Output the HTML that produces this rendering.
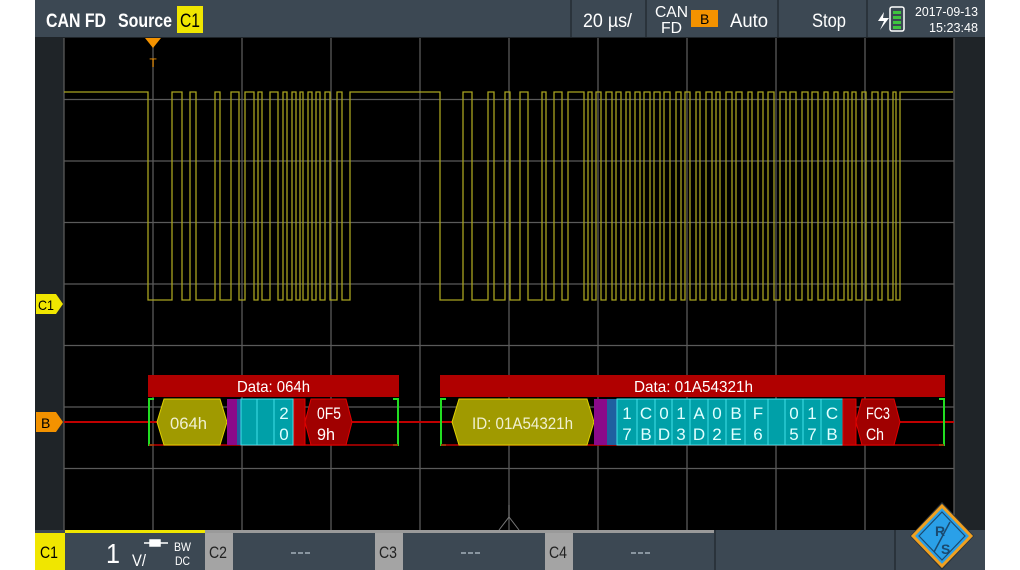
<!DOCTYPE html>
<html><head><meta charset="utf-8"><style>
html,body{margin:0;padding:0;background:#fff;width:1020px;height:570px;overflow:hidden;font-family:"Liberation Sans",sans-serif}
</style></head><body>
<svg width="1020" height="570" style="position:absolute;left:0;top:0" font-family="Liberation Sans, sans-serif">
<rect x="35" y="0" width="950" height="570" fill="#1f2428"/>
<rect x="35" y="0" width="950" height="37" fill="#3c4853"/>
<g stroke="#2a333b" stroke-width="2"><line x1="571" y1="0" x2="571" y2="37"/><line x1="646" y1="0" x2="646" y2="37"/><line x1="778" y1="0" x2="778" y2="37"/><line x1="867" y1="0" x2="867" y2="37"/></g>
<text x="46" y="27" fill="#fff" font-size="19" font-weight="bold" textLength="60" lengthAdjust="spacingAndGlyphs">CAN FD</text>
<text x="118" y="27" fill="#fff" font-size="19" font-weight="bold" textLength="54" lengthAdjust="spacingAndGlyphs">Source</text>
<rect x="177" y="6" width="26" height="27" fill="#f0e600"/>
<text x="180" y="27" fill="#000" font-size="19" textLength="20" lengthAdjust="spacingAndGlyphs">C1</text>
<text x="583" y="27" fill="#fff" font-size="19" textLength="49" lengthAdjust="spacingAndGlyphs">20 µs/</text>
<text x="655" y="17" fill="#fff" font-size="16" textLength="33" lengthAdjust="spacingAndGlyphs">CAN</text>
<text x="661" y="33" fill="#fff" font-size="16" textLength="21" lengthAdjust="spacingAndGlyphs">FD</text>
<rect x="691" y="10" width="27" height="17" fill="#f39200"/>
<text x="700" y="24" fill="#000" font-size="14">B</text>
<text x="730" y="27" fill="#fff" font-size="19" textLength="38" lengthAdjust="spacingAndGlyphs">Auto</text>
<text x="812" y="27" fill="#fff" font-size="19" textLength="34" lengthAdjust="spacingAndGlyphs">Stop</text>
<rect x="890" y="7" width="14" height="24" rx="2" fill="none" stroke="#fff" stroke-width="1.5"/>
<g fill="#3ec43e"><rect x="893" y="11" width="8" height="3"/><rect x="893" y="16" width="8" height="3"/><rect x="893" y="21" width="8" height="3"/><rect x="893" y="26" width="8" height="3"/></g>
<path d="M884 12 L878 21 L884 21 L880 30 L889 18 L883 18 Z" fill="#fff"/>
<text x="978" y="16" fill="#fff" font-size="13" text-anchor="end" textLength="63" lengthAdjust="spacingAndGlyphs">2017-09-13</text>
<text x="978" y="32" fill="#fff" font-size="13" text-anchor="end" textLength="49" lengthAdjust="spacingAndGlyphs">15:23:48</text>
<rect x="64" y="38" width="890" height="492" fill="#000"/>
<g stroke="#5a5a5a" stroke-width="1.3" id="grid"></g>
<path id="wave" fill="none" stroke="#a8a420" stroke-width="1.3"/>
<path d="M145 38 L161 38 L153 48 Z" fill="#f39200"/>
<text x="153" y="67" fill="#f39200" font-size="12" text-anchor="middle">T</text>
<path d="M36 294 L56 294 L63 304 L56 314 L36 314 Z" fill="#f0e600"/>
<text x="38" y="310" fill="#000" font-size="14" textLength="16" lengthAdjust="spacingAndGlyphs">C1</text>
<path d="M36 412 L56 412 L63 422 L56 432 L36 432 Z" fill="#f39200"/>
<text x="41" y="428" fill="#000" font-size="14">B</text>
<line x1="64" y1="422" x2="954" y2="422" stroke="#c00000" stroke-width="2"/>
<rect x="148" y="375" width="251" height="22" fill="#b00000"/>
<text x="237" y="392" fill="#fff" font-size="16" textLength="73" lengthAdjust="spacingAndGlyphs">Data: 064h</text>
<path d="M154 399 L149 399 L149 445 L154 445 M393 399 L398 399 L398 445 L393 445" fill="none" stroke="#22dd22" stroke-width="2"/>
<line x1="149" y1="445" x2="398" y2="445" stroke="#c00000" stroke-width="1.5"/>
<path d="M164 399 L220 399 L227 422 L220 445 L164 445 L157 422 Z" fill="#a09a00" stroke="#e0d000"/>
<text x="170" y="429" fill="#f0f0d0" font-size="17" textLength="37" lengthAdjust="spacingAndGlyphs">064h</text>
<rect x="227" y="399" width="10" height="46" fill="#8a0a8a"/>
<rect x="237" y="399" width="4" height="46" fill="#1f5fa0"/>
<rect x="241" y="399" width="52" height="46" fill="#00a0a8" stroke="#40e0e8"/>
<line x1="257" y1="399" x2="257" y2="445" stroke="#40e0e8"/><line x1="274" y1="399" x2="274" y2="445" stroke="#40e0e8"/>
<text x="284" y="419" fill="#e0ffff" font-size="17" text-anchor="middle">2</text>
<text x="284" y="440" fill="#e0ffff" font-size="17" text-anchor="middle">0</text>
<rect x="294" y="399" width="11" height="46" fill="#b00000" stroke="#e00000"/>
<path d="M311 399 L346 399 L352 422 L346 445 L311 445 L305 422 Z" fill="#a00000" stroke="#e00000"/>
<text x="317" y="419" fill="#fff" font-size="17" textLength="24" lengthAdjust="spacingAndGlyphs">0F5</text>
<text x="317" y="440" fill="#fff" font-size="17" textLength="18" lengthAdjust="spacingAndGlyphs">9h</text>
<rect x="440" y="375" width="505" height="22" fill="#b00000"/>
<text x="634" y="392" fill="#fff" font-size="16" textLength="119" lengthAdjust="spacingAndGlyphs">Data: 01A54321h</text>
<path d="M446 399 L441 399 L441 445 L446 445 M939 399 L944 399 L944 445 L939 445" fill="none" stroke="#22dd22" stroke-width="2"/>
<line x1="441" y1="445" x2="944" y2="445" stroke="#c00000" stroke-width="1.5"/>
<path d="M459 399 L587 399 L594 422 L587 445 L459 445 L452 422 Z" fill="#a09a00" stroke="#e0d000"/>
<text x="472" y="429" fill="#f0f0d0" font-size="17" textLength="101" lengthAdjust="spacingAndGlyphs">ID: 01A54321h</text>
<rect x="594" y="399" width="13" height="46" fill="#8a0a8a"/>
<rect x="607" y="399" width="10" height="46" fill="#1f5fa0"/>
<rect x="617" y="399" width="226" height="46" fill="#00a0a8" stroke="#40e0e8"/>
<g stroke="#40e0e8"><line x1="637" y1="399" x2="637" y2="445"/><line x1="655" y1="399" x2="655" y2="445"/><line x1="672" y1="399" x2="672" y2="445"/><line x1="690" y1="399" x2="690" y2="445"/><line x1="708" y1="399" x2="708" y2="445"/><line x1="726" y1="399" x2="726" y2="445"/><line x1="745" y1="399" x2="745" y2="445"/><line x1="768" y1="399" x2="768" y2="445"/><line x1="785" y1="399" x2="785" y2="445"/><line x1="803" y1="399" x2="803" y2="445"/><line x1="821" y1="399" x2="821" y2="445"/></g>
<g fill="#e0ffff" font-size="17" text-anchor="middle">
<text x="627" y="419">1</text><text x="627" y="440">7</text>
<text x="646" y="419">C</text><text x="646" y="440">B</text>
<text x="664" y="419">0</text><text x="664" y="440">D</text>
<text x="681" y="419">1</text><text x="681" y="440">3</text>
<text x="699" y="419">A</text><text x="699" y="440">D</text>
<text x="717" y="419">0</text><text x="717" y="440">2</text>
<text x="736" y="419">B</text><text x="736" y="440">E</text>
<text x="758" y="419">F</text><text x="758" y="440">6</text>
<text x="794" y="419">0</text><text x="794" y="440">5</text>
<text x="812" y="419">1</text><text x="812" y="440">7</text>
<text x="832" y="419">C</text><text x="832" y="440">B</text>
</g>
<rect x="843" y="399" width="13" height="46" fill="#b00000" stroke="#e00000"/>
<path d="M862 399 L894 399 L900 422 L894 445 L862 445 L856 422 Z" fill="#a00000" stroke="#e00000"/>
<text x="866" y="419" fill="#fff" font-size="17" textLength="24" lengthAdjust="spacingAndGlyphs">FC3</text>
<text x="866" y="440" fill="#fff" font-size="17" textLength="18" lengthAdjust="spacingAndGlyphs">Ch</text>
<path d="M499 530 L509 517 L519 530 M509 517 L509 505" fill="none" stroke="#777" stroke-width="1"/>
<rect x="35" y="530" width="950" height="40" fill="#3c4853"/>
<rect x="65" y="530" width="140" height="3" fill="#f0e600"/>
<rect x="205" y="530" width="510" height="3" fill="#9a9a9a"/>
<rect x="35" y="533" width="30" height="37" fill="#f0e600"/>
<text x="40" y="558" fill="#000" font-size="17" textLength="18" lengthAdjust="spacingAndGlyphs">C1</text>
<text x="106" y="563" fill="#fff" font-size="28" textLength="14" lengthAdjust="spacingAndGlyphs">1</text>
<text x="132" y="566" fill="#fff" font-size="17" textLength="14" lengthAdjust="spacingAndGlyphs">V/</text>
<path d="M144 543 L160 543 M150 540 L160 540 L160 546 L150 546 Z M160 543 L168 543" stroke="#fff" fill="#fff" stroke-width="1.5"/>
<text x="174" y="551" fill="#fff" font-size="12" textLength="17" lengthAdjust="spacingAndGlyphs">BW</text>
<text x="175" y="565" fill="#fff" font-size="12" textLength="15" lengthAdjust="spacingAndGlyphs">DC</text>
<rect x="205" y="533" width="28" height="37" fill="#a4a4a4"/><text x="209" y="558" fill="#222" font-size="17" textLength="18" lengthAdjust="spacingAndGlyphs">C2</text>
<rect x="375" y="533" width="28" height="37" fill="#a4a4a4"/><text x="379" y="558" fill="#222" font-size="17" textLength="18" lengthAdjust="spacingAndGlyphs">C3</text>
<rect x="545" y="533" width="28" height="37" fill="#a4a4a4"/><text x="549" y="558" fill="#222" font-size="17" textLength="18" lengthAdjust="spacingAndGlyphs">C4</text>
<g stroke="#8a96a0" stroke-width="2"><line x1="291" y1="553" x2="311" y2="553" stroke-dasharray="5 2"/><line x1="461" y1="553" x2="481" y2="553" stroke-dasharray="5 2"/><line x1="631" y1="553" x2="651" y2="553" stroke-dasharray="5 2"/></g>
<g stroke="#2a333b" stroke-width="2"><line x1="715" y1="530" x2="715" y2="570"/><line x1="895" y1="530" x2="895" y2="570"/></g>
<path d="M942 502 L974 536 L942 570 L910 536 Z" fill="#2a333b"/>
<path d="M942 506 L971 536 L942 566 L913 536 Z" fill="#2aa0e8" stroke="#f0a020" stroke-width="3"/>
<path d="M942 512 L965 536 L942 560 L919 536 Z" fill="none" stroke="#1a4a70" stroke-width="1.2"/>
<text x="935" y="536" fill="#1a4a70" font-size="14" font-weight="bold">R</text>
<text x="941" y="554" fill="#1a4a70" font-size="14" font-weight="bold">S</text>
<line x1="950" y1="522" x2="934" y2="552" stroke="#1a4a70" stroke-width="1.5"/>
</svg>
<script>
var g=document.getElementById('grid'),s='';
for(var i=0;i<11;i++){var x=64+i*89;s+='<line x1="'+x+'" y1="38" x2="'+x+'" y2="530"/>';}
for(var j=1;j<8;j++){var y=38+j*61.5;s+='<line x1="64" y1="'+y+'" x2="954" y2="'+y+'"/>';}
g.innerHTML=s;
var H=92,L=300;
var e1=[148,172,182,190,196,215,220,231,239,245,254,258,262,270,278,283,287,292,296,300,303,308,312,316,320,325,330,337,342,350];
var e2=[440,463,472,488,494,505,510,520,528,542,546,554,562,568,584,588,592,596,601,606,612,616,621,626,630,635,640,644,650,654,660,664,670,676,681,685,690,696,700,706,712,716,720,726,732,736,742,748,752,758,763,768,774,780,786,790,796,802,808,812,818,824,828,834,838,844,848,852,856,862,866,872,878,882,888,893,896,900];
var edges=e1.concat(e2),st=H,d='M64 '+H;
for(var k=0;k<edges.length;k++){d+=' L'+edges[k]+' '+st;st=(st==H?L:H);d+=' L'+edges[k]+' '+st;}
d+=' L953 '+st;
document.getElementById('wave').setAttribute('d',d);
</script>
</body></html>
